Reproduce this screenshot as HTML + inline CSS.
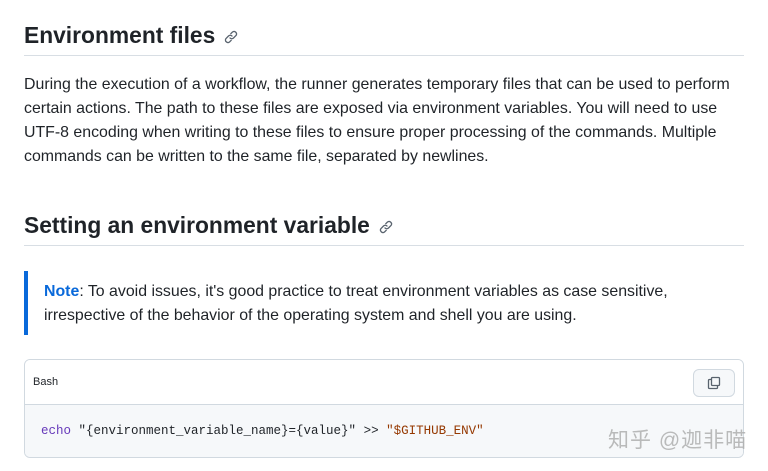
<!DOCTYPE html>
<html><head><meta charset="utf-8"><style>
body{margin:0;background:#fff;width:768px;height:471px;overflow:hidden;font-family:"Liberation Sans","Noto Sans CJK SC",sans-serif;color:#1f2328;position:relative}
.a{position:absolute}
h2{position:absolute;left:24px;margin:0;font-size:22.8px;font-weight:600;line-height:30px;white-space:nowrap}
.rule{position:absolute;left:24px;width:720px;height:1px;background:#d8dee4}
p{position:absolute;left:24px;margin:0;font-size:15.9px;line-height:24px;width:740px;white-space:nowrap}
.link{display:inline-block;vertical-align:middle;margin-left:8px}
</style></head><body>
<h2 style="top:20px">Environment files<svg class="link" width="16" height="16" viewBox="0 0 16 16"><path d="M7.8 4.7l1.7-1.7a2.5 2.5 0 013.5 3.5l-2.5 2.5a2.5 2.5 0 01-3.5 0M8.2 11.3l-1.7 1.7a2.5 2.5 0 01-3.5-3.5l2.5-2.5a2.5 2.5 0 013.5 0" fill="none" stroke="#59636e" stroke-width="1.3" stroke-linecap="round"/></svg></h2>
<div class="rule" style="top:55px"></div>
<p style="top:73px">During the execution of a workflow, the runner generates temporary files that can be used to perform<br>certain actions. The path to these files are exposed via environment variables. You will need to use<br>UTF-8 encoding when writing to these files to ensure proper processing of the commands. Multiple<br>commands can be written to the same file, separated by newlines.</p>
<h2 style="top:210px">Setting an environment variable<svg class="link" width="16" height="16" viewBox="0 0 16 16"><path d="M7.8 4.7l1.7-1.7a2.5 2.5 0 013.5 3.5l-2.5 2.5a2.5 2.5 0 01-3.5 0M8.2 11.3l-1.7 1.7a2.5 2.5 0 01-3.5-3.5l2.5-2.5a2.5 2.5 0 013.5 0" fill="none" stroke="#59636e" stroke-width="1.3" stroke-linecap="round"/></svg></h2>
<div class="rule" style="top:245px"></div>
<div class="a" style="left:24px;top:271px;width:4px;height:64px;background:#0969da"></div>
<p style="left:44px;top:280px;width:700px"><b style="color:#0969da;font-weight:600">Note</b>: To avoid issues, it's good practice to treat environment variables as case sensitive,<br>irrespective of the behavior of the operating system and shell you are using.</p>
<div class="a" style="left:24px;top:359px;width:718px;height:97px;border:1px solid #d1d9e0;border-radius:6px;overflow:hidden">
 <div style="height:44px;background:#fff;border-bottom:1px solid #d1d9e0;position:relative">
  <span class="a" style="left:8px;top:16px;font-size:11px">Bash</span>
  <div class="a" style="left:668px;top:9px;width:40px;height:26px;border:1px solid #d1d9e0;border-radius:6px;background:#f6f8fa">
   <svg class="a" style="left:12px;top:5px" width="16" height="16" viewBox="0 0 16 16"><path d="M5.5 4.5h-2a1 1 0 00-1 1v7a1 1 0 001 1h7a1 1 0 001-1v-2M6.5 2.5h6a1 1 0 011 1v6a1 1 0 01-1 1h-6a1 1 0 01-1-1v-6a1 1 0 011-1z" fill="none" stroke="#59636e" stroke-width="1.3"/></svg>
  </div>
 </div>
 <div style="height:52px;background:#f6f8fa;font-family:'Liberation Mono',monospace;font-size:12.5px;line-height:52px;padding-left:16px;white-space:pre"><span style="color:#6639ba">echo</span> "{environment_variable_name}={value}" &gt;&gt; <span style="color:#953800">"$GITHUB_ENV"</span></div>
</div>
<div class="a" style="left:608px;top:424px;font-size:21px;color:rgba(170,170,170,0.8);letter-spacing:1px">知乎 @迦非喵</div>
</body></html>
